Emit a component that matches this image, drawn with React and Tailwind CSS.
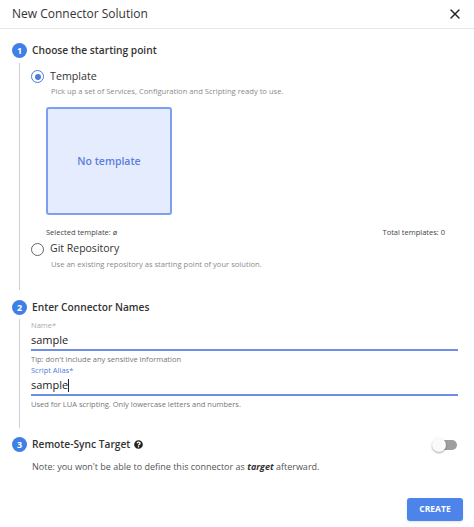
import React from "react";
import { X } from "lucide-react";
import { FaQuestionCircle } from "react-icons/fa";

function StepBadge({ n }) {
  return (
    <div className="w-[15px] h-[15px] rounded-full bg-[#3f7fe6] text-white text-[9px] font-bold flex items-center justify-center shrink-0">
      {n}
    </div>
  );
}

function Radio({ checked }) {
  return (
    <div
      className={
        "w-[13px] h-[13px] rounded-full border-[1.5px] flex items-center justify-center shrink-0 " +
        (checked ? "border-[#4a7be0]" : "border-[#666]")
      }
    >
      {checked && <div className="w-[6px] h-[6px] rounded-full bg-[#4a7be0]" />}
    </div>
  );
}

export default function App() {
  return (
    <div className="w-[474px] h-[527px] overflow-hidden bg-white text-[#333] font-['Open_Sans',sans-serif]">
      <div className="h-[29px] px-3 flex items-center justify-between border-b border-[#e6e6e6]">
        <h3 className="text-[12px] text-[#333]">New Connector Solution</h3>
        <X size={16} strokeWidth={2} className="text-[#222] mr-[-1px]" />
      </div>

      <div className="pl-3 pr-4 pt-[14px]">
        {/* step 1 */}
        <div className="flex items-center gap-[5px] h-[15px]">
          <StepBadge n={1} />
          <span className="text-[10.2px] font-semibold">Choose the starting point</span>
        </div>
        <div className="ml-[7px] mt-[5px] border-l border-[#cfcfcf] pl-[11px] pt-[7px] pb-[20px]">
          <div className="flex items-center gap-[6px] h-[13px]">
            <Radio checked />
            <span className="text-[10.7px]">Template</span>
          </div>
          <p className="ml-[20px] mt-[3px] text-[7.6px] text-[#8a8a8a]">
            Pick up a set of Services, Configuration and Scripting ready to use.
          </p>
          <div className="ml-[15px] mt-[10px] w-[126px] h-[108px] rounded-[3px] bg-[#e4ecfd] border-2 border-[#7d9ff0] flex items-center justify-center">
            <span className="text-[10.5px] font-semibold text-[#5b80dd]">No template</span>
          </div>
          <div className="ml-[15px] mt-[12px] flex justify-between text-[7.5px] text-[#444] mr-[13px]">
            <span>Selected template: ø</span>
            <span>Total templates: 0</span>
          </div>
          <div className="flex items-center gap-[6px] h-[13px] mt-[4px]">
            <Radio />
            <span className="text-[10.5px]">Git Repository</span>
          </div>
          <p className="ml-[20px] mt-[3px] text-[7.6px] text-[#8a8a8a]">
            Use an existing repository as starting point of your solution.
          </p>
        </div>

        {/* step 2 */}
        <div className="flex items-center gap-[5px] h-[15px] mt-[10px]">
          <StepBadge n={2} />
          <span className="text-[10.2px] font-semibold">Enter Connector Names</span>
        </div>
        <div className="ml-[7px] mt-[4px] border-l border-[#cfcfcf] pl-[11px] pb-[18px]">
          <label className="block text-[7.5px] text-[#aaa] leading-[12px]">Name*</label>
          <div className="text-[11px] leading-[18px] border-b-2 border-[#6d8fe6] text-[#222]">sample</div>
          <p className="mt-[3px] text-[7.5px] text-[#777] leading-[11px]">Tip: don't include any sensitive information</p>
          <label className="block text-[7.5px] text-[#4f7ee0] leading-[11px]">Script Alias*</label>
          <div className="text-[11px] leading-[18px] border-b-2 border-[#6d8fe6] text-[#222] flex items-center">
            sample<span className="inline-block w-px h-[13px] bg-[#222]" />
          </div>
          <p className="mt-[3px] text-[7.5px] text-[#777] leading-[11px]">
            Used for LUA scripting. Only lowercase letters and numbers.
          </p>
        </div>

        {/* step 3 */}
        <div className="flex items-center h-[15px] mt-[9px]">
          <StepBadge n={3} />
          <span className="ml-[5px] text-[10.2px] font-semibold">Remote-Sync Target</span>
          <FaQuestionCircle className="ml-[4px] text-[#222] w-[9px] h-[9px]" />
          <div className="ml-auto mr-[1px] relative w-[24px] h-[10px] rounded-full bg-[#9e9e9e]">
            <div className="absolute left-[-1px] top-[-2px] w-[14px] h-[14px] rounded-full bg-[#fafafa] shadow-[0_1px_2px_rgba(0,0,0,0.35)]" />
          </div>
        </div>
        <p className="ml-[20px] mt-[8px] text-[9px] text-[#555]">
          Note: you won't be able to define this connector as <b className="italic font-bold text-[#333]">target</b> afterward.
        </p>

        <div className="flex justify-end mt-[24px] mr-[-5px]">
          <button className="w-[56px] h-[23px] rounded-[3px] bg-[#4c84ec] text-white text-[8.5px] font-bold shadow-sm">
            CREATE
          </button>
        </div>
      </div>
    </div>
  );
}
